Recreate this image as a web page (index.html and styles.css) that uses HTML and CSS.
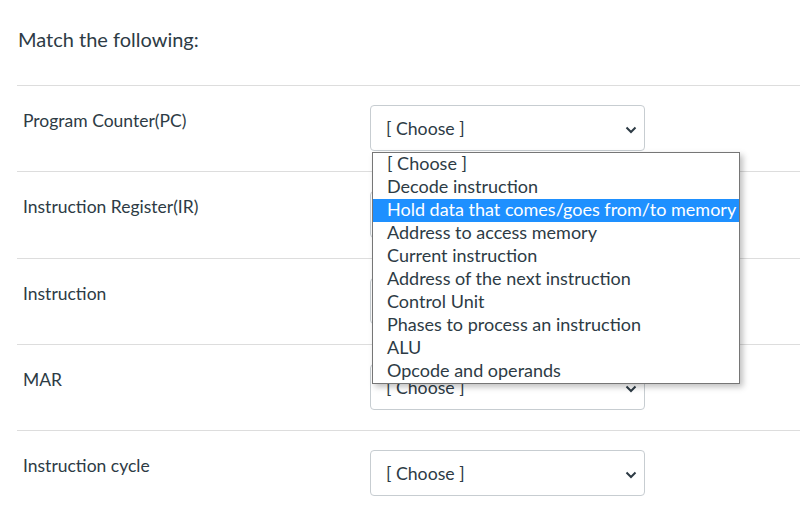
FILE: index.html
```html
<!DOCTYPE html>
<html>
<head>
  <title>Match the following</title>
  <link rel="stylesheet" href="styles.css">
</head>
<body>
  <div class="question">
    <p class="prompt">Match the following:</p>

    <div class="answers">
      <div class="match-row">
        <div class="match-label">Program Counter(PC)</div>
        <div class="match-select">
          <div class="select-box">
            <span>[ Choose ]</span>
            <svg class="chevron" width="12" height="8" viewBox="0 0 12 8"><path d="M1.5 1.5 L6 6 L10.5 1.5" fill="none" stroke="#2d3b45" stroke-width="2"/></svg>
          </div>
          <!-- the open list of the first select -->
          <ul class="select-menu">
            <li>[ Choose ]</li>
            <li>Decode instruction</li>
            <li class="active">Hold data that comes/goes from/to memory</li>
            <li>Address to access memory</li>
            <li>Current instruction</li>
            <li>Address of the next instruction</li>
            <li>Control Unit</li>
            <li>Phases to process an instruction</li>
            <li>ALU</li>
            <li>Opcode and operands</li>
          </ul>
        </div>
      </div>

      <div class="match-row">
        <div class="match-label">Instruction Register(IR)</div>
        <div class="match-select">
          <div class="select-box">
            <span>[ Choose ]</span>
            <svg class="chevron" width="12" height="8" viewBox="0 0 12 8"><path d="M1.5 1.5 L6 6 L10.5 1.5" fill="none" stroke="#2d3b45" stroke-width="2"/></svg>
          </div>
        </div>
      </div>

      <div class="match-row">
        <div class="match-label">Instruction</div>
        <div class="match-select">
          <div class="select-box">
            <span>[ Choose ]</span>
            <svg class="chevron" width="12" height="8" viewBox="0 0 12 8"><path d="M1.5 1.5 L6 6 L10.5 1.5" fill="none" stroke="#2d3b45" stroke-width="2"/></svg>
          </div>
        </div>
      </div>

      <div class="match-row">
        <div class="match-label">MAR</div>
        <div class="match-select">
          <div class="select-box">
            <span>[ Choose ]</span>
            <svg class="chevron" width="12" height="8" viewBox="0 0 12 8"><path d="M1.5 1.5 L6 6 L10.5 1.5" fill="none" stroke="#2d3b45" stroke-width="2"/></svg>
          </div>
        </div>
      </div>

      <div class="match-row">
        <div class="match-label">Instruction cycle</div>
        <div class="match-select">
          <div class="select-box">
            <span>[ Choose ]</span>
            <svg class="chevron" width="12" height="8" viewBox="0 0 12 8"><path d="M1.5 1.5 L6 6 L10.5 1.5" fill="none" stroke="#2d3b45" stroke-width="2"/></svg>
          </div>
        </div>
      </div>
    </div>
  </div>
</body>
</html>
```

FILE: styles.css
```css
body {
  margin: 0;
  background-color: #ffffff;
  font-family: Lato, 'Liberation Sans', sans-serif;
  color: #2d3b45;
}

.question {
  padding-left: 17px;
}

.prompt {
  margin: 0;
  padding: 27px 0 0 1px;
  height: 58px;
  font-size: 20px;
  line-height: 24px;
}

.match-row {
  display: flex;
  border-top: 1px solid #dddddd;
  padding: 19px 0 20px;
}

.match-label {
  width: 353px;
  padding: 4px 0 0 6px;
  box-sizing: border-box;
  font-size: 17.5px;
  line-height: 24px;
}

.match-select {
  position: relative;
}

.select-box {
  width: 275px;
  height: 46.3px;
  box-sizing: border-box;
  border: 1px solid #c7cdd1;
  border-radius: 4px;
  display: flex;
  align-items: center;
  justify-content: space-between;
  padding: 0 7px 0 15px;
  font-size: 17.7px;
}

.chevron {
  margin-top: 3px;
}

/* open dropdown list */
.select-menu {
  position: absolute;
  top: 47px;
  left: 2px;
  z-index: 2;
  width: 366px;
  margin: 0;
  padding: 0;
  list-style: none;
  background-color: #ffffff;
  border: 1px solid #767676;
  box-shadow: 3px 3px 6px rgba(0,0,0,0.25);
  font-size: 18px;
}

.select-menu li {
  height: 23px;
  line-height: 20px;
  padding-left: 14px;
  white-space: nowrap;
}

.select-menu li.active {
  background-color: #1e90ff;
  color: #ffffff;
}
```
